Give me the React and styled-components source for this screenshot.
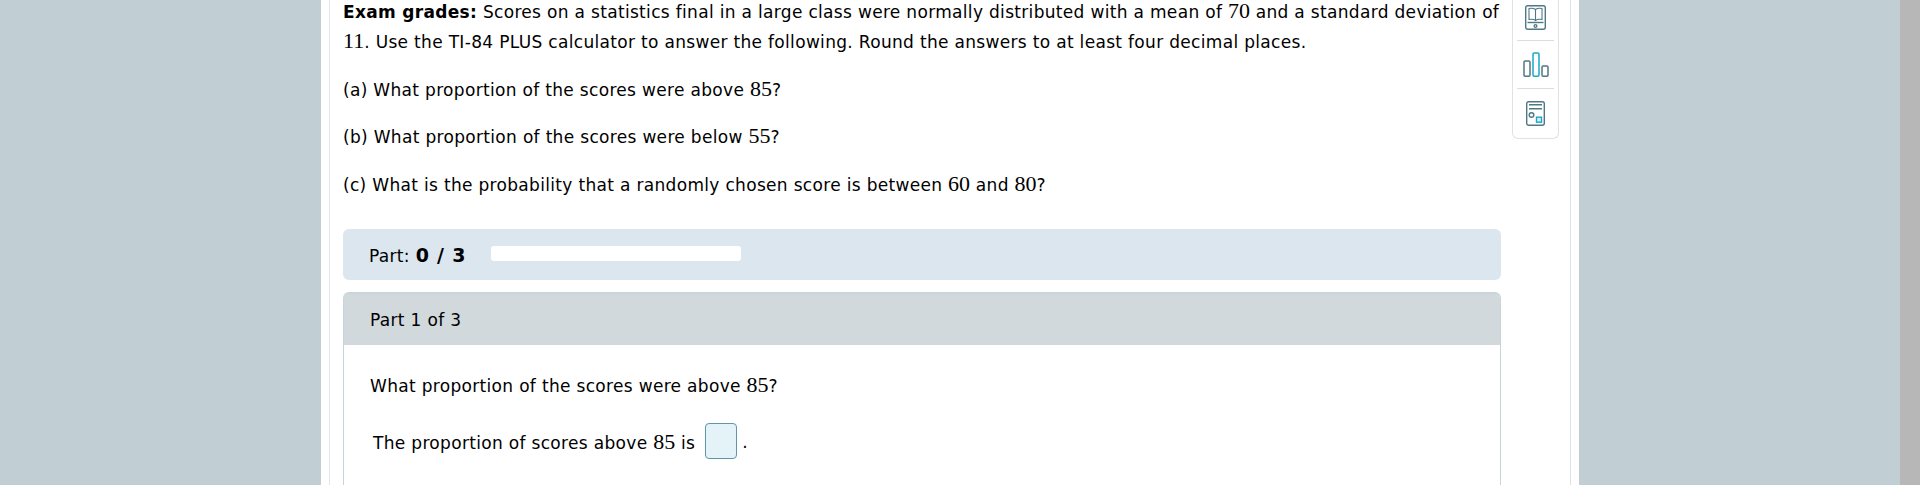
import React from 'react'
import styled, { createGlobalStyle } from 'styled-components'

const GlobalStyle = createGlobalStyle`
  html, body {
    margin: 0;
    padding: 0;
    height: 485px;
    overflow: hidden;
    background: #c1ced4;
  }
`

const Screen = styled.div`
  display: flex;
  height: 485px;
  overflow: hidden;
`

const Backdrop = styled.div`
  flex: 1;
  min-width: 0;
  display: flex;
  padding: 0 321px;
  background: #c1ced4;
`

const Scrollbar = styled.div`
  width: 20px;
  background: #b7b7b7;
`

const Page = styled.div`
  flex: 1;
  display: flex;
  padding: 0 8px;
  background: #fff;
  color: #000;
  font-family: 'DejaVu Sans', Verdana, sans-serif;
  font-size: 17px;
  letter-spacing: 0.32px;
  overflow: hidden;
`

const Sheet = styled.div`
  flex: 1;
  display: flex;
  gap: 11px;
  padding-left: 13px;
  border-left: 1px solid #e0e7ea;
  border-right: 1px solid #dbe3e6;
`

const Main = styled.div`
  width: 1158px;
  flex: none;
`

const IntroLine = styled.p`
  margin: 0;
  line-height: ${(props) => props.$height}px;
  white-space: nowrap;
`

const Question = styled.p`
  margin: ${(props) => props.$top || '17.5px'} 0 0;
  line-height: 30px;
  white-space: nowrap;
`

const Num = styled.span`
  font-family: 'Liberation Serif', 'Times New Roman', serif;
  font-size: 22px;
  line-height: 1;
  letter-spacing: 0;
`

const ProgressBar = styled.div`
  display: flex;
  align-items: center;
  height: 51px;
  margin-top: 29.5px;
  padding-left: 26px;
  background: #dbe6ef;
  border-radius: 6px;
`

const ProgressLabel = styled.span`
  width: 122px;
`

const ProgressCount = styled.b`
  font-size: 19px;
  word-spacing: 1px;
`

const ProgressTrack = styled.div`
  width: 250px;
  height: 15px;
  margin-bottom: 3px;
  background: #fff;
  border-radius: 3px;
`

const PartCard = styled.div`
  margin-top: 12px;
  border: 1px solid #c9d5da;
  border-top-width: 2px;
  border-bottom: none;
  border-radius: 6px 6px 0 0;
  height: 300px;
`

const PartHeader = styled.div`
  display: flex;
  align-items: center;
  height: 51px;
  padding-left: 26px;
  background: #d1d9dc;
  border-radius: 4px 4px 0 0;
`

const PartBody = styled.div`
  padding: 26px 26px 0;
`

const AnswerLine = styled.div`
  display: flex;
  align-items: center;
  margin: 22px 0 0 3px;
  white-space: pre;
`

const AnswerText = styled.span`
  padding-top: 2px;
`

const AnswerBox = styled.span`
  box-sizing: border-box;
  width: 32px;
  height: 36px;
  margin: 0 5px 0 10px;
  background: #e4f3f7;
  border: 1.5px solid #5e98a8;
  border-radius: 4px;
`

const Side = styled.div`
  display: flex;
  flex-direction: column;
  align-items: center;
  box-sizing: border-box;
  width: 47px;
  height: 139px;
  flex: none;
  padding: 0 4px;
  background: #fff;
  border: 1px solid #dde3e6;
  border-top: none;
  border-radius: 0 0 6px 6px;
`

const SideSlot = styled.div`
  display: flex;
  align-items: center;
  justify-content: center;
  align-self: stretch;
  box-sizing: border-box;
  height: ${(props) => props.$height}px;
  padding-bottom: ${(props) => props.$pad || 0}px;
  border-bottom: ${(props) => (props.$last ? 'none' : '1px solid #d7dfe2')};
`

const BookIcon = () => (
  <svg width="21" height="25" viewBox="0 0 21 25" fill="none" stroke="#4e7886" strokeWidth="1.4">
    <rect x="0.7" y="0.7" width="19.6" height="23.6" rx="2" />
    <path d="M10.5 4.5C9 3.3 6.5 3 4 3.5V14.5C6.5 14 9 14.3 10.5 15.5C12 14.3 14.5 14 17 14.5V3.5C14.5 3 12 3.3 10.5 4.5ZM10.5 4.5V15.5" strokeWidth="1.1" />
    <path d="M2.5 17.5H18.5" />
    <circle cx="10.5" cy="21" r="1.4" />
  </svg>
)

const BarsIcon = () => (
  <svg width="26" height="25" viewBox="0 0 26 25" fill="none" strokeWidth="1.5">
    <rect x="1" y="9" width="6" height="15.2" rx="1.2" stroke="#56757f" />
    <rect x="10" y="1" width="6" height="23.2" rx="1.2" stroke="#19a9c6" />
    <rect x="19" y="14" width="6" height="10.2" rx="1.2" stroke="#56757f" />
  </svg>
)

const NotesIcon = () => (
  <svg width="19" height="25" viewBox="0 0 19 25" fill="none" strokeWidth="1.4">
    <rect x="0.7" y="0.7" width="17.6" height="23.6" rx="2" stroke="#4e7886" />
    <path d="M3 3.8H16M3 7.8H16" stroke="#4e7886" />
    <circle cx="5.5" cy="14" r="2.3" stroke="#4e7886" />
    <rect x="10.5" y="16.2" width="5" height="5" fill="#d9eef3" stroke="#19a9c6" />
  </svg>
)

export default function App() {
  return (
    <>
      <GlobalStyle />
      <Screen>
        <Backdrop>
          <Page>
            <Sheet>
              <Main>
                <IntroLine $height={24}>
                  <b>Exam grades:</b> Scores on a statistics final in a large class were normally distributed with a mean of <Num>70</Num> and a standard deviation of
                </IntroLine>
                <IntroLine $height={36}>
                  <Num>11</Num>. Use the TI-84 PLUS calculator to answer the following. Round the answers to at least four decimal places.
                </IntroLine>
                <Question $top="14.5px">(a) What proportion of the scores were above <Num>85</Num>?</Question>
                <Question>(b) What proportion of the scores were below <Num>55</Num>?</Question>
                <Question>(c) What is the probability that a randomly chosen score is between <Num>60</Num> and <Num>80</Num>?</Question>
                <ProgressBar>
                  <ProgressLabel>Part: <ProgressCount>0 / 3</ProgressCount></ProgressLabel>
                  <ProgressTrack />
                </ProgressBar>
                <PartCard>
                  <PartHeader>Part 1 of 3</PartHeader>
                  <PartBody>
                    <Question $top="0">What proportion of the scores were above <Num>85</Num>?</Question>
                    <AnswerLine>
                      <AnswerText>The proportion of scores above <Num>85</Num> is</AnswerText>
                      <AnswerBox />
                      <AnswerText>.</AnswerText>
                    </AnswerLine>
                  </PartBody>
                </PartCard>
              </Main>
              <Side>
                <SideSlot $height={41} $pad={5}><BookIcon /></SideSlot>
                <SideSlot $height={48}><BarsIcon /></SideSlot>
                <SideSlot $height={49} $last><NotesIcon /></SideSlot>
              </Side>
            </Sheet>
          </Page>
        </Backdrop>
        <Scrollbar />
      </Screen>
    </>
  )
}
